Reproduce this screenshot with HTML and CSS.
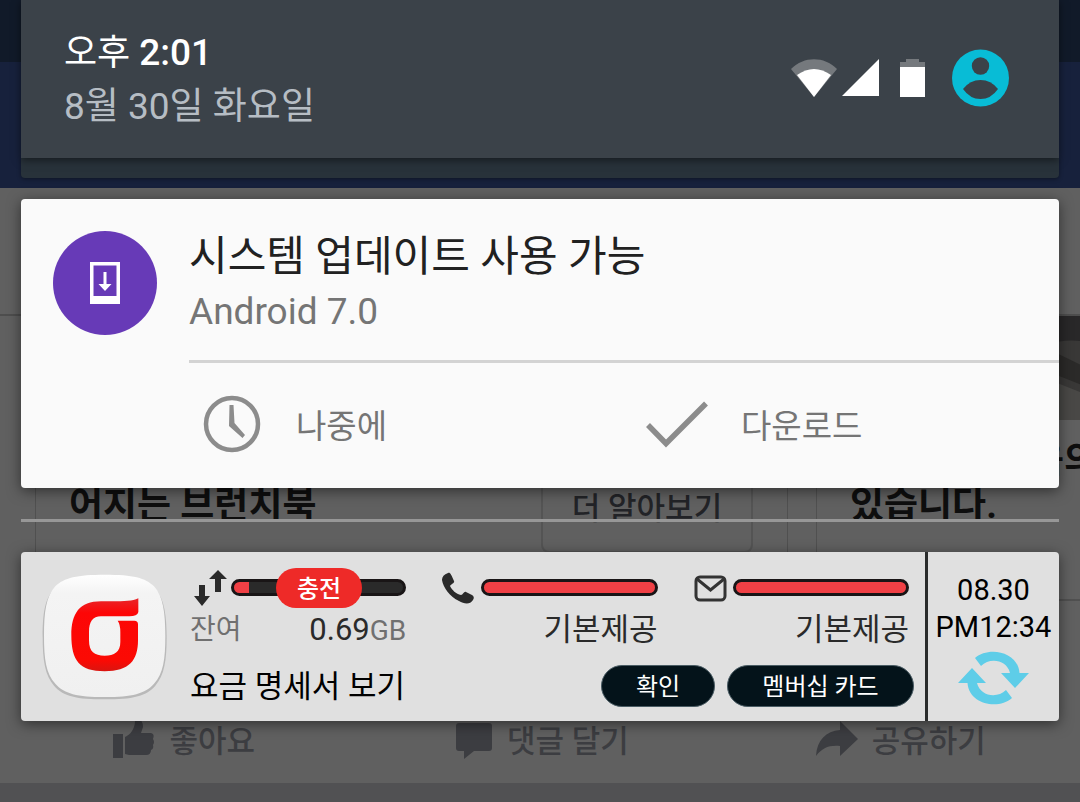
FILE: index.html
```html
<!DOCTYPE html>
<html lang="ko">
<head>
<meta charset="utf-8">
<meta name="viewport" content="width=device-width, initial-scale=1">
<title>알림</title>
<link rel="stylesheet" href="styles.css">
</head>
<body>
<div class="feed">
  <div class="feed-status"></div>
  <div class="feed-nav"></div>
  <div class="feed-post">
    <div class="carousel">
      <article class="slide slide-main">
        <h2 class="slide-title">어지는 브런치북</h2>
        <button class="more" type="button">더 알아보기</button>
      </article>
      <article class="slide slide-next">
        <svg class="photo" viewBox="0 0 280 105" preserveAspectRatio="none" aria-hidden="true">
          <rect width="280" height="105" fill="#292829"/>
          <path d="M240 26Q262 22 280 30V105H240Z" fill="#393837"/>
          <path d="M240 38L280 58V76L240 60Z" fill="#2b2a29"/>
          <path d="M240 68L280 84V105H240Z" fill="#494846"/>
        </svg>
        <h2 class="slide-title"><span class="title-end">음의</span>있습니다.</h2>
      </article>
    </div>
    <div class="reactions">
      <button class="reaction" type="button">
        <svg width="42" height="40" viewBox="0 0 42 40" aria-hidden="true"><path d="M0 15H10V39H0ZM12 18C17 16 22 10 22 2Q22 0 25 0Q30 1 30 8L28 14H38Q42 15 40 20Q42 23 40 26Q41 30 38 31Q38 36 33 36H16L12 35Z"/></svg>
        좋아요
      </button>
      <button class="reaction" type="button">
        <svg width="37" height="40" viewBox="0 0 37 40" aria-hidden="true"><path d="M3 4H33Q36 4 36 7V29Q36 32 33 32H18L8 40V32H3Q0 32 0 29V7Q0 4 3 4Z"/></svg>
        댓글 달기
      </button>
      <button class="reaction" type="button">
        <svg width="42" height="40" viewBox="0 0 42 40" aria-hidden="true"><path d="M24 2L42 20L24 37V27C13 26 6 29 0 37C1 21 10 12 24 11Z"/></svg>
        공유하기
      </button>
    </div>
  </div>
  <div class="feed-gap"></div>
</div>

<main class="shade">
  <header class="status">
    <div class="clock">
      <div class="time">오후 <b>2:01</b></div>
      <div class="date">8월 30일 화요일</div>
    </div>
    <div class="tray">
      <svg class="wifi" width="46" height="38" viewBox="0 0 46 38" aria-label="Wi-Fi"><path d="M0 10C13-3 33-3 46 10L23 38Z" fill="#75797d"/><path d="M6 16Q23 4 40 16L23 38Z" fill="#fff"/></svg>
      <svg class="signal" width="37" height="38" viewBox="0 0 37 38" aria-label="신호"><path d="M37 0V37H0Z" fill="#fff"/></svg>
      <svg class="battery" width="25" height="38" viewBox="0 0 25 38" aria-label="배터리"><path d="M0 3H6V0H19V3H25V9H0Z" fill="#75797d"/><path d="M0 8H25V38H0Z" fill="#fff"/></svg>
      <svg class="avatar" width="57" height="58" viewBox="0 0 57 58" aria-label="사용자"><circle cx="28.5" cy="29" r="28.5" fill="#08bcd6"/><circle cx="28.5" cy="17" r="8.700" fill="#3b4249"/><path d="M11 40Q18 31 28.500 31T46 40Q39 50 28.500 50T11 40Z" fill="#3b4249"/></svg>
    </div>
  </header>
  <div class="status-edge"></div>

  <section class="card update">
    <svg class="update-icon" width="104" height="104" viewBox="0 0 104 104" aria-hidden="true">
      <circle cx="52" cy="52" r="52" fill="#673ab7"/>
      <path fill-rule="evenodd" d="M37 31H67V73H37ZM40.500 34.500V65H63.500V34.500Z" fill="#fff"/>
      <path d="M50.500 41H53.500V53H58.500L52 60L45.500 53H50.500Z" fill="#fff"/>
    </svg>
    <div class="update-body">
      <h1 class="update-title">시스템 업데이트 사용 가능</h1>
      <p class="update-version">Android 7.0</p>
      <div class="update-actions">
        <button class="action" type="button">
          <svg width="64" height="64" viewBox="0 0 64 64" aria-hidden="true"><circle cx="32" cy="32" r="26" fill="none" stroke="#8c8c8c" stroke-width="4.500"/><path d="M29.500 13H33.500L34.500 31L45 43L42.500 46L29 34Z" fill="#8c8c8c"/></svg>
          나중에
        </button>
        <button class="action" type="button">
          <svg width="64" height="64" viewBox="0 0 64 64" aria-hidden="true"><path d="M3 33L21 51.500L61 11.500" fill="none" stroke="#8c8c8c" stroke-width="5.500"/></svg>
          다운로드
        </button>
      </div>
    </div>
  </section>

  <hr class="divider">

  <section class="card plan">
    <svg class="plan-logo" width="126" height="128" viewBox="38 38 378 384" aria-hidden="true">
      <defs>
        <linearGradient id="tile" x1="0" y1="0" x2="0" y2="1"><stop offset="0" stop-color="#fff"/><stop offset=".15" stop-color="#f4f4f4"/><stop offset="1" stop-color="#f0f0f0"/></linearGradient>
        <linearGradient id="red" x1="0" y1="0" x2="0" y2="1"><stop offset="0" stop-color="#e8262a"/><stop offset=".2" stop-color="#fd0606"/><stop offset=".85" stop-color="#fb0a04"/><stop offset="1" stop-color="#d91510"/></linearGradient>
      </defs>
      <path d="M226 50C320 50 352 58 378 86C406 116 412 170 412 231C412 300 405 346 378 376C350 408 310 417 226 417C142 417 102 408 74 376C47 346 40 300 40 231C40 160 46 116 74 86C102 58 142 50 226 50Z" fill="#b9b9b9"/>
      <path d="M226 43C312 43 348 52 374 78C402 108 408 160 408 226C408 296 402 340 374 370C348 400 308 410 226 410C144 410 104 400 78 370C50 340 44 296 44 226C44 156 50 108 78 78C104 52 144 43 226 43Z" fill="url(#tile)"/>
      <path d="M327 114C305 124 280 123 215 123C150 123 126 160 126 225C126 300 150 333 226 333C300 333 326 300 326 240V192Q326 181 315 181H265Q273 192 273 215V245C273 275 255 286 226 286C195 286 179 275 179 240V215C179 185 190 168 215 168H300Q324 168 327 155Z" fill="url(#red)"/>
    </svg>
    <div class="plan-body">
      <div class="meters">
        <div class="meter">
          <div class="meter-row">
            <svg width="41" height="40" viewBox="0 0 41 40" aria-hidden="true"><path d="M28 3L37 12H31V25H25V12H19ZM9 18H15V29H20L12 39L4 29H9Z" fill="#2a2a2a"/></svg>
            <div class="bar"><div class="fill" style="width:9%"></div><button class="charge" type="button">충전</button></div>
          </div>
          <div class="meter-text"><span class="muted">잔여</span><span class="amount">0.69<span class="muted">GB</span></span></div>
        </div>
        <div class="meter">
          <div class="meter-row">
            <svg width="40" height="40" viewBox="0 0 40 40" aria-hidden="true"><path d="M7 6C9 5 10 7 13 14C14 16 10 17 9 19C11 23 15 27 20 28C22 28 23 24 25 25L31 28Q34 30 32 33C29 38 23 37 18 34C9 30 2 20 1 13Q1 8 7 6Z" fill="#2a2a2a"/></svg>
            <div class="bar"><div class="fill full"></div></div>
          </div>
          <div class="meter-text end">기본제공</div>
        </div>
        <div class="meter">
          <div class="meter-row">
            <svg width="40" height="40" viewBox="0 0 40 40" aria-hidden="true"><g fill="none" stroke="#333" stroke-width="3"><rect x="3" y="10" width="29" height="23" rx="4"/><path d="M4 12L17.500 23L31 12"/></g></svg>
            <div class="bar"><div class="fill full"></div></div>
          </div>
          <div class="meter-text end">기본제공</div>
        </div>
      </div>
      <div class="plan-links">
        <a class="bill" href="#bill">요금 명세서 보기</a>
        <button class="pill" type="button">확인</button>
        <button class="pill wide" type="button">멤버십 카드</button>
      </div>
    </div>
    <div class="plan-side">
      <div>08.30</div>
      <div>PM12:34</div>
      <button class="refresh" type="button" aria-label="새로고침">
        <svg width="71" height="54" viewBox="0 0 71 54" aria-hidden="true">
          <path d="M17 7C30-5 60 0 61.500 22H71L57 37L43 22H52C49 9 32 6 23 15Z" fill="#5ecde8"/>
          <path d="M54 47C41 59 11 54 9.500 32H0L14 17L28 32H19C22 45 39 48 48 39Z" fill="#5ecde8"/>
        </svg>
      </button>
    </div>
  </section>
</main>
</body>
</html>
```

FILE: styles.css
```css
* {
  box-sizing: border-box;
}

body {
  position: relative;
  margin: 0;
  background: #515153;
  font-family: Roboto, "Noto Sans CJK KR", sans-serif;
  overflow-x: hidden;
}

h1, h2, p {
  margin: 0;
  font-weight: 400;
}

button {
  margin: 0;
  padding: 0;
  border: 0;
  background: none;
  color: inherit;
  font: inherit;
  cursor: pointer;
}

svg {
  display: block;
  flex: none;
}

/* Dimmed feed under the shade */
.feed-status {
  height: 62px;
  background: #111a29;
}

.feed-nav {
  height: 126px;
  background: #17213c;
}

.feed-post {
  padding-top: 126px;
  background: #606060;
}

.carousel {
  display: flex;
  gap: 28px;
  padding-left: 35px;
  border-top: 2px solid #4e4e4e;
  overflow: hidden;
}

.slide {
  border: 1px solid #505050;
  border-top: 0;
  border-bottom-width: 2px;
  color: #0e0e0e;
}

.slide-main {
  display: flex;
  flex: none;
  align-items: flex-end;
  justify-content: space-between;
  width: calc(100% - 292px);
  padding: 0 34px 46px 33px;
}

.slide-main .slide-title {
  padding-bottom: 25px;
}

.slide-next {
  flex: none;
  width: 283px;
  padding-bottom: 71px;
}

.photo {
  width: 100%;
  height: 104px;
}

.slide-next .slide-title {
  padding: 18px 0 0 33px;
}

.slide-title {
  font-size: 37px;
  font-weight: 700;
  line-height: 45px;
  white-space: nowrap;
}

.title-end {
  display: block;
  text-align: right;
}

.more {
  width: 212px;
  height: 88px;
  padding-bottom: 8px;
  border: 2px solid #545454;
  border-radius: 8px;
  color: #222327;
  font-size: 31px;
  font-weight: 500;
}

.reactions {
  display: grid;
  grid-template-columns: repeat(3, 1fr);
  height: 182px;
  padding: 96px 0 0 5px;
}

.reaction {
  display: flex;
  align-items: center;
  justify-content: center;
  gap: 14px;
  height: 88px;
  padding-bottom: 5px;
  color: #3c3d41;
  fill: #3c3d41;
  font-size: 31px;
  font-weight: 500;
}

.feed-gap {
  height: 19px;
  background: #515153;
}

/* Notification shade */
.shade {
  position: absolute;
  top: 0;
  right: 0;
  left: 0;
  padding: 0 21px;
}

.status {
  position: relative;
  display: flex;
  align-items: center;
  justify-content: space-between;
  padding: 22px 50px 24px 43px;
  background: #3b4249;
  box-shadow: 0 2px 8px rgba(0, 0, 0, .5);
}

.clock {
  padding-top: 4px;
  color: #fff;
  font-size: 37px;
  line-height: 54px;
}

.time {
  font-size: 36px;
}

.time b {
  font-size: 37px;
  font-weight: 500;
}

.date {
  color: #b6bdc4;
}

.tray {
  display: flex;
  align-items: center;
}

.signal {
  margin-left: 5px;
}

.battery {
  margin-left: 21px;
}

.avatar {
  margin-left: 27px;
}

.status-edge {
  height: 20px;
  border-radius: 0 0 4px 4px;
  background: #28323a;
  box-shadow: 0 1px 4px rgba(0, 0, 0, .4);
}

.card {
  display: flex;
  border-radius: 4px;
  box-shadow: 0 3px 14px rgba(0, 0, 0, .5);
}

.update {
  gap: 32px;
  margin-top: 21px;
  padding-left: 32px;
  background: #fafafa;
}

.update-icon {
  margin-top: 32px;
}

.update-body {
  flex: 1;
  padding-top: 27px;
}

.update-title {
  color: #212121;
  font-size: 42px;
  line-height: 62px;
}

.update-version {
  color: #757575;
  font-size: 37px;
  line-height: 48px;
}

.update-actions {
  display: grid;
  grid-template-columns: 1fr 1fr;
  column-gap: 20px;
  margin-top: 24px;
  border-top: 3px solid #d3d3d3;
}

.action {
  display: flex;
  align-items: center;
  gap: 32px;
  height: 125px;
  padding: 0 0 3px 11px;
  color: #757575;
  font-size: 33px;
}

.divider {
  height: 3px;
  margin: 31px 0 30px;
  border: 0;
  background: #979797;
}

.plan {
  background: #e0e0e0;
}

.plan-logo {
  margin: 21px 22px 0 21px;
}

.plan-body {
  flex: 1;
  padding: 15px 11px 13px 0;
}

.meters {
  display: grid;
  grid-template-columns: repeat(3, 1fr);
  column-gap: 35px;
  padding-right: 5px;
}

.meter-row {
  display: flex;
  align-items: center;
}

.bar {
  position: relative;
  flex: 1;
  height: 17px;
  border: 3px solid #191516;
  border-radius: 9px;
  background: #2a2a2a;
}

.fill {
  height: 11px;
  border-radius: 6px 0 0 6px;
  background: #f04045;
}

.fill.full {
  border-radius: 6px;
}

.charge {
  position: absolute;
  top: -14px;
  left: 42px;
  width: 86px;
  height: 40px;
  padding-bottom: 2px;
  border-radius: 20px;
  background: #ee2a28;
  color: #fff;
  font-size: 24px;
  font-weight: 500;
}

.meter-text {
  display: flex;
  justify-content: space-between;
  padding-top: 1px;
  color: #2a2a2a;
  font-size: 31px;
  line-height: 44px;
}

.meter-text.end {
  justify-content: flex-end;
}

.muted {
  color: #707070;
  font-size: 28px;
}

.plan-links {
  display: flex;
  align-items: center;
  gap: 12px;
  margin-top: 11px;
}

.bill {
  margin-right: auto;
  padding-top: 2px;
  color: #000;
  font-size: 31px;
  line-height: 42px;
  text-decoration: none;
}

.pill {
  width: 114px;
  height: 42px;
  padding-bottom: 3px;
  border: 1px solid #4a5c64;
  border-radius: 21px;
  background: #04131a;
  color: #fff;
  font-size: 24px;
}

.pill.wide {
  width: 187px;
}

.plan-side {
  display: flex;
  flex-direction: column;
  align-items: center;
  width: 134px;
  padding-top: 20px;
  border-left: 3px solid #2a2c2c;
  color: #000;
  font-size: 29px;
  line-height: 37px;
}

.refresh {
  margin-top: 5px;
}
```
